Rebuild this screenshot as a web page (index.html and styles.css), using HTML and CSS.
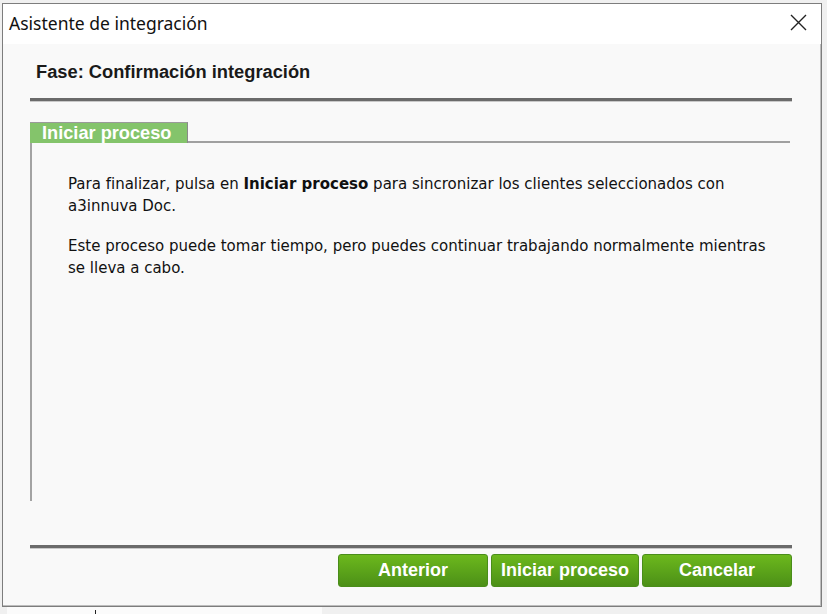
FILE: index.html
```html
<!DOCTYPE html>
<html lang="es">
<head>
<meta charset="utf-8">
<title>Asistente de integración</title>
<link rel="stylesheet" href="styles.css">
</head>
<body>
<div class="window">
  <div class="titlebar">
    <span class="title">Asistente de integración</span>
    <span class="close" aria-label="Cerrar">
      <svg width="17" height="17" viewBox="0 0 17 17"><path d="M1 1 L16 16 M16 1 L1 16" stroke="#222" stroke-width="1.4" fill="none"/></svg>
    </span>
  </div>
  <div class="content">
    <div class="phase">Fase: Confirmación integración</div>
    <div class="rule"></div>
    <div class="tabrow">
      <div class="tab">Iniciar proceso</div>
      <div class="tabline"></div>
    </div>
    <div class="panel">
      <p>Para finalizar, pulsa en <b>Iniciar proceso</b> para sincronizar los clientes seleccionados con a3innuva Doc.</p>
      <p>Este proceso puede tomar tiempo, pero puedes continuar trabajando normalmente mientras se lleva a cabo.</p>
    </div>
    <div class="rule bottom"></div>
    <div class="buttons">
      <button class="btn">Anterior</button>
      <button class="btn mid">Iniciar proceso</button>
      <button class="btn">Cancelar</button>
    </div>
  </div>
</div>
<div class="below">
  <div class="below-left"><span class="tick"></span></div>
</div>
</body>
</html>
```
FILE: styles.css
```css
html, body {
  margin: 0;
  padding: 0;
}
body {
  background: #f0f0f0;
  width: 827px;
  height: 614px;
  overflow: hidden;
  font-family: "Liberation Sans", Arial, sans-serif;
  padding-top: 3px;
  padding-left: 2px;
  box-sizing: border-box;
}
.window {
  width: 820px;
  height: 604px;
  box-sizing: border-box;
  border: 1px solid #7d7d7d;
  box-shadow: inset -1px -1px 0 #bdbdbd;
  background: #f9f9f9;
  display: flex;
  flex-direction: column;
}
.titlebar {
  height: 40px;
  background: #ffffff;
  display: flex;
  align-items: center;
  justify-content: space-between;
  padding: 0 14px 0 6px;
  flex: none;
}
.title {
  font-family: "Noto Sans", "Liberation Sans", sans-serif;
  font-size: 17.5px;
  color: #111;
  margin-top: -3px;
}
.close {
  display: flex;
  margin-top: -4px;
}
.content {
  flex: 1;
  display: flex;
  flex-direction: column;
  padding: 0 29px 0 27px;
}
.phase {
  height: 54px;
  line-height: 56px;
  padding-left: 6px;
  font-weight: bold;
  font-size: 18.3px;
  color: #1a1a1a;
  flex: none;
}
.rule {
  height: 3px;
  background: #6b6b6b;
  border-bottom: 1px solid #c9c9c9;
  flex: none;
}
.tabrow {
  margin-top: 20px;
  display: flex;
  align-items: flex-end;
  height: 21px;
  flex: none;
}
.tab {
  width: 158px;
  height: 21px;
  box-sizing: border-box;
  background: #84c46b;
  border-top: 1px solid #9a9a9a;
  border-right: 1px solid #8a8a8a;
  color: #fff;
  font-weight: bold;
  font-size: 18.2px;
  line-height: 20px;
  padding-left: 12px;
}
.tabline {
  flex: 1;
  height: 2px;
  background: #a0a0a0;
  margin-right: 2px;
}
.panel {
  border-left: 2px solid #a3a3a3;
  height: 358px;
  box-sizing: border-box;
  padding: 30px 0 0 36px;
  flex: none;
  font-family: "DejaVu Sans", sans-serif;
  font-size: 15px;
  color: #111;
}
.panel p {
  margin: 0 0 18px 0;
  line-height: 22px;
  width: 702px;
}
.panel b {
  font-weight: bold;
}
.rule.bottom {
  margin-top: 44px;
}
.buttons {
  display: flex;
  justify-content: flex-end;
  gap: 3px;
  margin-top: 5px;
}
.btn {
  height: 33px;
  width: 150px;
  border: 1px solid #4a8d1a;
  border-radius: 3px;
  background: linear-gradient(#6cb81d, #4c9017);
  color: #fff;
  font-family: "Liberation Sans", Arial, sans-serif;
  font-weight: bold;
  font-size: 18px;
  padding: 0;
}
.btn.mid {
  width: 148px;
}
.below {
  height: 8px;
  display: flex;
}
.below-left {
  width: 315px;
  margin-left: 5px;
  background: #fbfbfb;
  position: relative;
}
.tick {
  position: absolute;
  left: 88px;
  top: 3px;
  width: 1px;
  height: 5px;
  background: #222;
}
```
